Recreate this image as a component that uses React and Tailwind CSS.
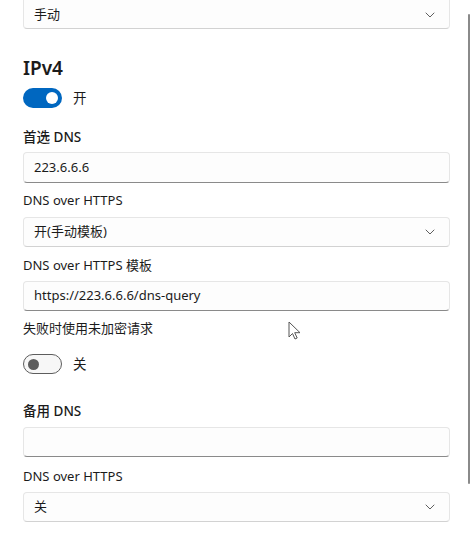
import React from "react";

const font = { fontFamily: '"Noto Sans", "Noto Sans CJK SC", sans-serif' };

function Chevron() {
  return (
    <svg width="10" height="6" viewBox="0 0 10 6" fill="none">
      <path d="M1 1l4 4 4-4" stroke="#5f5f5f" strokeWidth="1" strokeLinecap="round" strokeLinejoin="round" />
    </svg>
  );
}

function Dropdown({ value, className = "" }) {
  return (
    <div className={`flex items-center justify-between rounded-[4px] border border-[#e6e6e6] border-b-[#d2d2d2] bg-[#fdfdfd] pl-[10px] pr-[14px] text-[13px] text-[#1b1b1b] ${className}`}>
      <span>{value}</span>
      <Chevron />
    </div>
  );
}

function TextBox({ value, className = "" }) {
  return (
    <div className={`flex items-center rounded-[4px] border border-[#e6e6e6] border-b-[#8a8a8a] bg-[#fdfdfd] px-[10px] text-[13px] text-[#1b1b1b] ${className}`}>
      <span>{value}</span>
    </div>
  );
}

function Toggle({ on, label, className = "" }) {
  return (
    <div className={`flex h-[20px] items-center gap-[11px] ${className}`}>
      {on ? (
        <div className="flex h-[20px] w-[39px] items-center justify-end rounded-full bg-[#0067c0] pr-[4px]">
          <div className="h-[12px] w-[12px] rounded-full bg-white" />
        </div>
      ) : (
        <div className="flex h-[20px] w-[39px] items-center rounded-full border border-[#5d5d5d] bg-[#f7f7f7] pl-[4px]">
          <div className="h-[11px] w-[11px] rounded-full bg-[#5d5d5d]" />
        </div>
      )}
      <span className="text-[13.5px] text-[#1b1b1b]">{label}</span>
    </div>
  );
}

function Label({ children, bold, className = "" }) {
  return (
    <div className={`h-[20px] leading-[20px] text-[#1b1b1b] ${bold ? "text-[13.5px] font-medium" : "text-[13px]"} ${className}`}>
      {children}
    </div>
  );
}

export default function App() {
  return (
    <div className="relative h-[558px] w-[474px] overflow-hidden bg-white" style={font}>
      <div className="flex flex-col pl-[23px] pr-[24px]">
        <Dropdown value="手动" className="-mt-[4px] h-[33px] pt-[4px]" />
        <div className="mt-[25px] h-[28px] text-[19px] font-semibold leading-[28px] text-[#1b1b1b]">IPv4</div>
        <Toggle on label="开" className="mt-[6px]" />
        <Label bold className="mt-[19px]">首选 DNS</Label>
        <TextBox value="223.6.6.6" className="mt-[5px] h-[31px]" />
        <Label className="mt-[7px]">DNS over HTTPS</Label>
        <Dropdown value="开(手动模板)" className="mt-[7px] h-[30px]" />
        <Label className="mt-[8px]">DNS over HTTPS 模板</Label>
        <TextBox value="https://223.6.6.6/dns-query" className="mt-[6px] h-[30px]" />
        <Label className="mt-[7px]">失败时使用未加密请求</Label>
        <Toggle label="关" className="mt-[16px]" />
        <Label bold className="mt-[27px]">备用 DNS</Label>
        <TextBox value="" className="mt-[6px] h-[30px]" />
        <Label className="mt-[9px]">DNS over HTTPS</Label>
        <Dropdown value="关" className="mt-[6px] h-[30px]" />
      </div>

      {/* scrollbar */}
      <div className="absolute left-[468px] top-[14px] h-[470px] w-[2px] rounded-full bg-[#8a8a8a]" />

      {/* mouse cursor */}
      <svg className="absolute left-[288px] top-[321px]" width="13" height="20" viewBox="0 0 13 20">
        <path d="M1 1v15l3.5-3.5 2.5 5.5 2.2-1-2.5-5.3H12z" fill="#ffffff" stroke="#555" strokeWidth="1" strokeLinejoin="round" />
      </svg>
    </div>
  );
}
